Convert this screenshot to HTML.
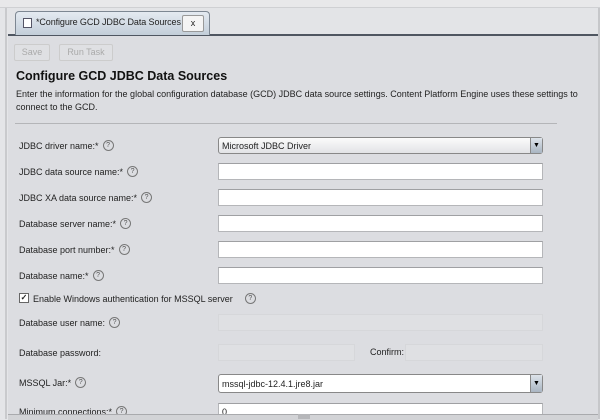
<!DOCTYPE html>
<html><head><style>
body{margin:0;width:600px;height:419px;overflow:hidden;background:#e4e5e8;font-family:"Liberation Sans",Arial,sans-serif;font-size:9px;color:#222;position:relative}
.a{position:absolute;white-space:nowrap}
.lbl{position:absolute;left:19px;font-size:9px;color:#222;display:flex;align-items:center;white-space:pre;height:11px}
.q{display:block;width:9px;height:9px;border:1px solid #777;border-radius:50%;font-size:7px;line-height:9px;text-align:center;color:#555;margin-left:4px}
.in{position:absolute;left:218px;width:323px;height:15px;background:#fff;border:1px solid #b5b6b9;border-top-color:#9fa0a3}
.dis{background:#dfe0e3;border-color:#d6d7da}
.sel{border-radius:3px;border-color:#888;}
.arr{position:absolute;right:0;top:0;width:11px;height:15px;background:linear-gradient(#dde3ea,#a9b5c2);border-left:1px solid #888;font-size:7px;text-align:center;line-height:15px;color:#000}
</style></head><body>
<div class="a" style="left:0;top:0;width:600px;height:7px;background:#e8e8ea;border-bottom:1px solid #cfd0d3"></div>
<div class="a" style="left:5px;top:8px;width:2px;height:411px;background:#c9cacd"></div>
<div class="a" style="left:8px;top:8px;width:590px;height:411px;background:#dcdde1"></div>
<div class="a" style="left:8px;top:8px;width:590px;height:26px;background:#e3e4e7"></div>
<div class="a" style="left:8px;top:34px;width:590px;height:2px;background:#4f5661"></div>
<div class="a" style="left:15px;top:11px;width:193px;height:23px;background:linear-gradient(#e4eaf1,#c3ced9);border:1px solid #7d8792;border-bottom:none;border-radius:4px 4px 0 0"></div>
<div class="a" style="left:23px;top:18px;width:7px;height:8px;border:1px solid #556;background:#fff"></div>
<div class="a" style="left:36px;top:17px;font-size:9px;letter-spacing:-0.1px">*Configure GCD JDBC Data Sources</div>
<div class="a" style="left:182px;top:15px;width:20px;height:15px;background:#f4f4f4;border:1px solid #999;border-radius:2px;text-align:center;line-height:14px;font-size:9px">x</div>
<div class="a" style="left:598px;top:8px;width:2px;height:411px;background:#c6c7ca"></div>
<div class="a" style="left:14px;top:44px;width:34px;height:15px;border:1px solid #ccc;border-radius:2px;color:#aaa;text-align:center;line-height:15px;background:#dfe0e3">Save</div>
<div class="a" style="left:59px;top:44px;width:52px;height:15px;border:1px solid #ccc;border-radius:2px;color:#aaa;text-align:center;line-height:15px;background:#dfe0e3">Run Task</div>
<div class="a" style="left:16px;top:69px;font-size:12.5px;font-weight:bold;color:#111">Configure GCD JDBC Data Sources</div>
<div class="a" style="left:16px;top:88px;font-size:9px;line-height:13px;width:580px;white-space:normal">Enter the information for the global configuration database (GCD) JDBC data source settings. Content Platform Engine uses these settings to connect to the GCD.</div>
<div class="a" style="left:15px;top:123px;width:542px;height:1px;background:#b4b5b8"></div>

<div class="lbl" style="top:140px">JDBC driver name:*<span class="q">?</span></div>
<div class="in sel" style="top:137px;background:linear-gradient(#fbfbfb,#e2e3e6)"><span style="position:absolute;left:3px;top:3px">Microsoft JDBC Driver</span><div class="arr">▼</div></div>
<div class="lbl" style="top:166px">JDBC data source name:*<span class="q">?</span></div>
<div class="in" style="top:163px"></div>
<div class="lbl" style="top:192px">JDBC XA data source name:*<span class="q">?</span></div>
<div class="in" style="top:189px"></div>
<div class="lbl" style="top:218px">Database server name:*<span class="q">?</span></div>
<div class="in" style="top:215px"></div>
<div class="lbl" style="top:244px">Database port number:*<span class="q">?</span></div>
<div class="in" style="top:241px"></div>
<div class="lbl" style="top:270px">Database name:*<span class="q">?</span></div>
<div class="in" style="top:267px"></div>
<div class="a" style="left:19px;top:293px;width:8px;height:8px;border:1px solid #666;background:#fff;font-size:8px;line-height:8px;text-align:center;font-weight:bold">✓</div>
<div class="lbl" style="left:33px;top:293px">Enable Windows authentication for MSSQL server<span class="q" style="margin-left:12px">?</span></div>
<div class="lbl" style="top:317px">Database user name:<span class="q">?</span></div>
<div class="in dis" style="top:314px"></div>
<div class="lbl" style="top:347px">Database password:</div>
<div class="in dis" style="top:344px;width:135px"></div>
<div class="a" style="left:370px;top:347px">Confirm:</div>
<div class="in dis" style="top:344px;left:405px;width:136px"></div>
<div class="lbl" style="top:377px">MSSQL Jar:*<span class="q">?</span></div>
<div class="in sel" style="top:374px;height:17px"><span style="position:absolute;left:3px;top:4px">mssql-jdbc-12.4.1.jre8.jar</span><div class="arr" style="height:17px;line-height:17px">▼</div></div>
<div class="lbl" style="top:406px">Minimum connections:*<span class="q">?</span></div>
<div class="in" style="top:403px"><span style="position:absolute;left:3px;top:3px">0</span></div>
<div class="a" style="left:8px;top:414px;width:590px;height:5px;background:#d2d3d6;border-top:1px solid #a9aaad"></div>
<div class="a" style="left:298px;top:414px;width:12px;height:5px;background:#b6b7ba"></div>
</body></html>
